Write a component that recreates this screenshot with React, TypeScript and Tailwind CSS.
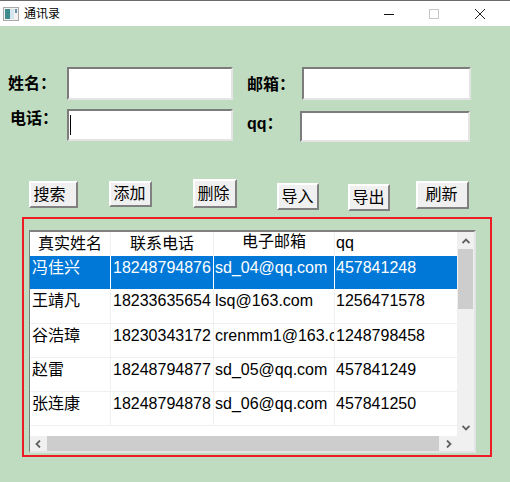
const rows = [
  { c: ["冯佳兴", "18248794876", "sd_04@qq.com", "457841248"], h: "h-[33px] bg-[#0078d7] text-white" },
  { c: ["王靖凡", "18233635654", "lsq@163.com", "1256471578"], h: "h-[35px] border-b border-[#f0f0f0]" },
  { c: ["谷浩璋", "18230343172", "crenmm1@163.com", "1248798458"], h: "h-[34px] border-b border-[#f0f0f0]" },
  { c: ["赵雷", "18248794877", "sd_05@qq.com", "457841249"], h: "h-[34px] border-b border-[#f0f0f0]" },
  { c: ["张连康", "18248794878", "sd_06@qq.com", "457841250"], h: "h-[34px] border-b border-[#f0f0f0]" },
];

const font = "[font-family:'Liberation_Sans','Noto_Sans_CJK_SC',sans-serif]";

function Btn({ label, className }: { label: string; className: string }) {
  return (
    <button
      className={`flex items-center justify-center bg-[#f0f0f0] border-2 border-t-white border-l-white border-r-[#808080] border-b-[#808080] text-[16px] leading-none text-black shrink-0 ${className}`}
    >
      {label}
    </button>
  );
}

const inputCls =
  "bg-white border-2 border-t-[#7c7c7c] border-l-[#7c7c7c] border-r-[#e4e4e4] border-b-[#e4e4e4] shrink-0";

export default function App() {
  return (
    <div className={`w-[510px] h-[482px] overflow-hidden bg-[#c0dcc0] text-black ${font}`}>
      {/* title bar */}
      <div className="h-[26px] bg-white border-t border-[#6b6b6b] flex items-center">
        <svg width="16" height="14" viewBox="0 0 16 14" className="ml-[3px] mt-[1px] shrink-0">
          <rect x="0.5" y="0.5" width="15" height="13" fill="#f2f2f2" stroke="#a8a8a8" />
          <rect x="2" y="2" width="5" height="10" fill="#3f8a8a" />
          <rect x="7" y="2" width="4" height="10" fill="#d5e6ee" />
          <rect x="12" y="2" width="2" height="4" fill="#6a8fa8" />
        </svg>
        <span className="ml-[5px] text-[12px] leading-none">通讯录</span>
        <svg width="112" height="12" viewBox="0 0 112 12" className="ml-auto mr-[14px] shrink-0">
          <path d="M0 6.5H10" stroke="#111" strokeWidth="1" />
          <rect x="45.5" y="1.5" width="9" height="9" fill="none" stroke="#c8c8c8" />
          <path d="M91 1L101 11M101 1L91 11" stroke="#222" strokeWidth="1" />
        </svg>
      </div>

      {/* form row 1 */}
      <div className="flex mt-[41px] h-[33px]">
        <span className="ml-[8px] w-[59px] mt-[7px] text-[16px] leading-[20px] font-bold">姓名：</span>
        <div className={`${inputCls} w-[166px] h-[33px]`} />
        <span className="ml-[14px] w-[56px] mt-[8px] text-[16px] leading-[20px] font-bold">邮箱：</span>
        <div className={`${inputCls} ml-[-1px] w-[169px] h-[33px]`} />
      </div>

      {/* form row 2 */}
      <div className="flex mt-[9px] h-[33px]">
        <span className="ml-[10px] w-[57px] mt-0 text-[16px] leading-[20px] font-bold">电话：</span>
        <div className={`${inputCls} w-[166px] h-[32px] flex items-center pl-[1px]`}>
          <div className="w-px h-[20px] bg-black" />
        </div>
        <span className="ml-[14px] w-[53px] mt-[5px] text-[16px] leading-[20px] font-bold">qq：</span>
        <div className={`${inputCls} mt-[2px] w-[170px] h-[31px]`} />
      </div>

      {/* buttons */}
      <div className="flex items-start h-[40px] mt-[35px]">
        <Btn label="搜索" className="ml-[29px] mt-[4px] w-[49px] h-[27px] pr-[8px]" />
        <Btn label="添加" className="ml-[31px] mt-[4px] w-[43px] h-[26px] pr-[2px]" />
        <Btn label="删除" className="ml-[41px] mt-[2px] w-[44px] h-[29px] pr-[3px]" />
        <Btn label="导入" className="ml-[40px] mt-[6px] w-[42px] h-[27px] pr-px" />
        <Btn label="导出" className="ml-[29px] mt-[7px] w-[42px] h-[27px] pr-px" />
        <Btn label="刷新" className="ml-[26px] mt-[4px] w-[53px] h-[28px] pr-[2px]" />
      </div>

      {/* red frame */}
      <div className="ml-[22px] w-[470px] h-[240px] border-2 border-[#ed1c24] pt-[11px] pl-[5px]">
        <div className="w-[447px] h-[223px] border-2 border-l border-t-[#808080] border-l-[#808080] border-r-[#e4e4e4] border-b-[#e4e4e4] bg-[#f0f0f0] flex flex-col">
          <div className="flex flex-1 min-h-0">
            {/* table */}
            <div className="w-[427px] bg-white text-[16px] rounded-br-[2px] overflow-hidden">
              <div className="h-[24px] flex">
                <div className="w-[81px] border-r border-[#f0f0f0] text-center pt-[2px] leading-[20px]">真实姓名</div>
                <div className="w-[103px] border-r border-[#f0f0f0] text-center pt-[2px] leading-[20px]">联系电话</div>
                <div className="w-[121px] border-r border-[#f0f0f0] text-center leading-[20px]">电子邮箱</div>
                <div className="flex-1 pl-[1px] pt-px leading-[20px]">qq</div>
              </div>
              {rows.map((r, i) => (
                <div key={r.c[0]} className={`flex leading-[20px] ${r.h}`}>
                  <div className={`w-[81px] pl-[2px] pt-[2px] border-r ${i === 0 ? "border-white" : "border-[#f0f0f0]"}`}>{r.c[0]}</div>
                  <div className={`w-[103px] pl-[2px] pt-[2px] border-r ${i === 0 ? "border-white" : "border-[#f0f0f0]"}`}>{r.c[1]}</div>
                  <div className={`w-[121px] pl-[1px] pt-[2px] border-r overflow-hidden whitespace-nowrap ${i === 0 ? "border-white" : "border-[#f0f0f0]"}`}>{r.c[2]}</div>
                  <div className="flex-1 pl-[1px] pt-[2px]">{r.c[3]}</div>
                </div>
              ))}
            </div>
            {/* vertical scrollbar */}
            <div className="w-[16px] ml-px flex flex-col items-center bg-[#f0f0f0]">
              <svg width="8" height="6" viewBox="0 0 8 6" className="mt-[6px]">
                <path d="M0.5 5L4 1.5L7.5 5" fill="none" stroke="#606060" strokeWidth="1.8" />
              </svg>
              <div className="mt-[5px] w-[15px] h-[60px] bg-[#cdcdcd] mr-[1px]" />
              <svg width="8" height="6" viewBox="0 0 8 6" className="mt-auto mb-[5px]">
                <path d="M0.5 1L4 4.5L7.5 1" fill="none" stroke="#606060" strokeWidth="1.8" />
              </svg>
            </div>
          </div>
          {/* horizontal scrollbar */}
          <div className="h-[15px] shrink-0 flex items-center ml-px">
            <svg width="6" height="8" viewBox="0 0 6 8" className="ml-[4px] shrink-0">
              <path d="M5 0.5L1.5 4L5 7.5" fill="none" stroke="#606060" strokeWidth="1.8" />
            </svg>
            <div className="ml-[6px] w-[392px] h-[15px] bg-[#cdcdcd]" />
            <svg width="6" height="8" viewBox="0 0 6 8" className="ml-[7px] shrink-0">
              <path d="M1 0.5L4.5 4L1 7.5" fill="none" stroke="#606060" strokeWidth="1.8" />
            </svg>
          </div>
        </div>
      </div>
    </div>
  );
}
